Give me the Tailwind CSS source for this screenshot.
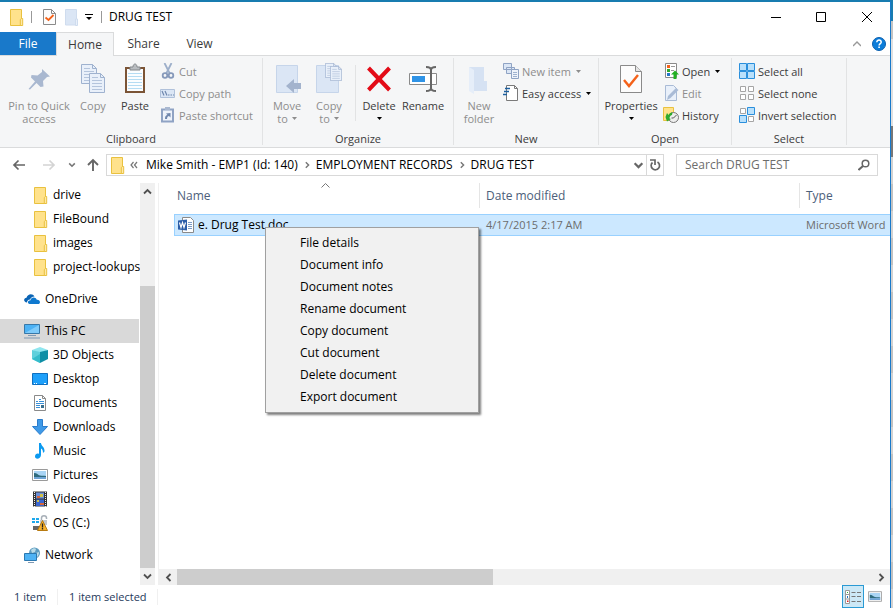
<!DOCTYPE html>
<html lang="en">
<head>
    <meta charset="UTF-8">
    <meta name="viewport" content="width=device-width, initial-scale=1.0">
    <title>DRUG TEST</title>
    <script src="https://cdn.jsdelivr.net/npm/@tailwindcss/browser@4"></script>
</head>
<body class="h-screen overflow-hidden flex font-['Open_Sans','Noto_Sans',sans-serif] text-[12px] leading-4 text-black">
    <!-- Shared icons -->
    <svg class="hidden">
        <symbol id="folder" viewBox="0 0 14 17">
            <path d="M.5.5h11v16H.5z" fill="#ffe28c" stroke="#e9c13f"/>
            <path d="M11.5 9.5h1.2v7h-2.4v-6z" fill="#ffe9a6" stroke="#e9c13f"/>
        </symbol>
        <symbol id="page-check" viewBox="0 0 22 28">
            <path d="M.5.5h15l6 6v21H.5z" fill="#fcfcfc" stroke="#8a8a8a"/>
            <path d="M15.5.5v6h6" fill="#e4e4e4" stroke="#8a8a8a"/>
            <path d="M4 15l5 6 9-11" fill="none" stroke="#f4621a" stroke-width="2.4"/>
        </symbol>
        <symbol id="page-lines" viewBox="0 0 16 20">
            <path d="M.5.5h11l4 4v15H.5z" fill="#e9f0fa" stroke="#9fb2cf"/>
            <path d="M11.5.5v4h4" fill="none" stroke="#9fb2cf"/>
            <path d="M3 4.500h6M3 7.500h10M3 10.500h10M3 13.500h10M3 16.500h10" stroke="#b4c4dc"/>
        </symbol>
        <symbol id="caret" viewBox="0 0 5 3"><path d="M0 0h5L2.500 3z" fill="currentColor"/></symbol>
        <symbol id="chevron-down" viewBox="0 0 10 10"><path d="M1.500 3L5 6.500 8.500 3" fill="none" stroke="currentColor" stroke-width="2"/></symbol>
        <symbol id="chevron-right" viewBox="0 0 10 10"><path d="M3.500 1.500L7 5 3.500 8.500" fill="none" stroke="currentColor" stroke-width="1.800"/></symbol>
        <symbol id="picture" viewBox="0 0 16 12">
            <path d="M.5.5h15v11H.5z" fill="#fff" stroke="#9a9a9a"/>
            <path d="M2 2h12v8H2z" fill="#a9d4f4"/>
            <path d="M2 4c3 0 4 2 6 2.500s4 0 6 .5v1H2z" fill="#2f6b7d"/>
            <path d="M2 8h12v2H2z" fill="#6fa3d4"/>
        </symbol>
    </svg>

    <div class="flex-1 min-w-0 flex flex-col bg-white border-t-2 border-t-[#187cb0] border-r border-r-[#1979ca]">
        <!-- Title bar -->
        <header class="h-[30px] shrink-0 flex items-center pl-[10px]">
            <svg class="w-[14px] h-[17px]"><use href="#folder"/></svg>
            <span class="w-px h-3 bg-[#999] ml-[7px]"></span>
            <button class="ml-[11px]" aria-label="Properties"><svg class="w-[13px] h-[16px]" viewBox="0 0 13 16"><path d="M.5.5h8l4 4v11H.5z" fill="#fcfcfc" stroke="#8a8a8a"/><path d="M8.500.5v4h4" fill="none" stroke="#8a8a8a"/><path d="M2.500 8.500l3 2.500 5-5" fill="none" stroke="#f4621a" stroke-width="1.800"/></svg></button>
            <button class="ml-[9px]" aria-label="New folder"><svg class="w-[13px] h-[17px]" viewBox="0 0 13 17"><path d="M.5.5h11v15.500H.5z" fill="#dbe6f5" stroke="#cfdcee"/><path d="M10.500 10h2v6.500h-2z" fill="#e9f0fa" stroke="#cfdcee"/></svg></button>
            <button class="ml-[7px]" aria-label="Customize Quick Access Toolbar"><svg class="w-[8px] h-[8px]" viewBox="0 0 8 8"><path d="M0 1.500h8" stroke="#000"/><path d="M1 4h6L4 7z"/></svg></button>
            <span class="w-px h-3 bg-[#999] ml-[8px]"></span>
            <h1 class="ml-[7px]">DRUG TEST</h1>
            <div class="ml-auto flex items-center">
                <button class="w-[45px] h-[28px] flex items-center justify-center" aria-label="Minimize"><svg class="w-[10px] h-[10px]" viewBox="0 0 10 10"><path d="M0 5.500h10" stroke="#000"/></svg></button>
                <button class="w-[45px] h-[28px] flex items-center justify-center" aria-label="Maximize"><svg class="w-[10px] h-[10px]" viewBox="0 0 10 10"><path d="M.5.5h9v9h-9z" fill="none" stroke="#000"/></svg></button>
                <button class="w-[47px] h-[28px] flex items-center justify-center" aria-label="Close"><svg class="w-[10px] h-[10px]" viewBox="0 0 10 10"><path d="M0 0l10 10M10 0L0 10" stroke="#000"/></svg></button>
            </div>
        </header>

        <!-- Ribbon tabs -->
        <nav class="h-[24px] shrink-0 flex items-stretch border-b border-[#dadbdc] text-[#3b3b3b]">
            <button class="w-[56px] bg-[#1979ca] text-white">File</button>
            <button class="w-[58px] -mb-px bg-[#f5f6f7] border-x border-t border-[#dadbdc]">Home</button>
            <button class="w-[59px]">Share</button>
            <button class="w-[53px]">View</button>
            <div class="ml-auto flex items-center pr-[4px] gap-[11px]">
                <button aria-label="Minimize the Ribbon"><svg class="w-[8px] h-[6px]" viewBox="0 0 8 6"><path d="M0 5l4-4 4 4" fill="none" stroke="#999" stroke-width="1.400"/></svg></button>
                <button aria-label="Help"><svg class="w-[14px] h-[14px]" viewBox="0 0 14 14"><circle cx="7" cy="7" r="6.500" fill="#0c7cd9" stroke="#0a5fae"/><path d="M4.800 5.300c0-3 4.600-2.800 4.400-.1C9.100 6.600 7.100 6.700 7.100 8.500" fill="none" stroke="#fff" stroke-width="1.500"/><path d="M6.300 9.500h1.600V11H6.300z" fill="#fff"/></svg></button>
            </div>
        </nav>

        <!-- Ribbon -->
        <div class="h-[92px] shrink-0 flex py-[2px] bg-[#f5f6f7] border-b border-[#dadbdc] text-[11px] leading-[13px] text-[#3b3b3b]">
            <section class="w-[263px] flex flex-col border-r border-[#e2e3e4]">
                <div class="flex-1 flex pl-[3px]">
                    <button class="w-[72px] flex flex-col items-center pt-[5px] text-[#8d8d8d]">
                        <svg class="w-[32px] h-[32px] mb-[4px]" viewBox="0 0 32 32"><path d="M19 6l8 7.500-3 .5-4 4 .5 5.500-3 .5-4-4-6.500 6.500-1.500-.5L12 18.500l-4-4 .5-2.500 6 .5L19 9z" fill="#a9b8d0"/></svg>
                        Pin to Quick<br>access
                    </button>
                    <button class="w-[36px] flex flex-col items-center pt-[5px] text-[#8d8d8d]">
                        <svg class="w-[26px] h-[32px] mb-[4px]" viewBox="0 0 26 32"><use href="#page-lines" x="1" y="1" width="16" height="20"/><use href="#page-lines" x="9" y="10" width="16" height="20"/></svg>
                        Copy
                    </button>
                    <button class="w-[48px] flex flex-col items-center pt-[5px]">
                        <svg class="w-[22px] h-[32px] mb-[4px]" viewBox="0 0 22 32"><path d="M1 4h20v26H1z" fill="#7b5436"/><path d="M3 6h16v22H3z" fill="#fbfdff"/><path d="M4 10.500h14M4 13.500h14M4 16.500h14M4 19.500h14M4 22.500h14M4 25.500h14" stroke="#b5dcf3"/><path d="M6 7V4h3c0-4 4-4 4 0h3v3z" fill="#b8bcc0" stroke="#84888c"/></svg>
                        Paste
                    </button>
                    <div class="flex flex-col pt-[2px] pl-px text-[#8d8d8d]">
                        <button class="h-[22px] flex items-center gap-[3px]"><svg class="w-4 h-4" viewBox="0 0 16 16"><path d="M4.500 0l5.500 11M11.500 0L6 11" stroke="#9dafca" stroke-width="1.800"/><circle cx="5" cy="12.500" r="2.300" fill="none" stroke="#8699ba" stroke-width="1.800"/><circle cx="11" cy="12.500" r="2.300" fill="none" stroke="#8699ba" stroke-width="1.800"/></svg>Cut</button>
                        <button class="h-[22px] flex items-center gap-[3px]"><svg class="w-4 h-4" viewBox="0 0 16 16"><path d="M.5 4.500h14v8H.5z" fill="#dbe6f5" stroke="#b0c1da"/><path d="M2 6l2 4.500M5 6l2 4.500M8 10h1.500M10.500 10H12M13 10h1" stroke="#6f87ad" stroke-width="1.200"/></svg>Copy path</button>
                        <button class="h-[22px] flex items-center gap-[3px]"><svg class="w-4 h-4" viewBox="0 0 16 16"><path d="M1 1.500h13v14H1z" fill="#8fa3c4"/><path d="M3 3.500h9v10H3z" fill="#eef3fb"/><path d="M5 0h5v3H5z" fill="#a9b8d0"/><path d="M5 12c0-3 1-4 2.500-4L6 6.500 10.500 6v4.500L9 9c-1 0-2 1-2 3z" fill="#6f87ad"/></svg>Paste shortcut</button>
                    </div>
                </div>
                <h2 class="text-center">Clipboard</h2>
            </section>

            <section class="w-[191px] flex flex-col border-r border-[#e2e3e4]">
                <div class="flex-1 flex pl-[3px]">
                    <button class="w-[42px] flex flex-col items-center pt-[5px] text-[#8d8d8d]">
                        <svg class="w-[28px] h-[32px] mb-[4px]" viewBox="0 0 28 32"><path d="M3.500 2.500h21v27h-21z" fill="#dbe6f5" stroke="#c6d5ea"/><path d="M29 20v6h-8v4l-8-7 8-7v4z" fill="#a3b3cd"/></svg>
                        Move<span class="flex items-center gap-1">to <svg class="w-[5px] h-[3px]"><use href="#caret"/></svg></span>
                    </button>
                    <button class="w-[42px] flex flex-col items-center pt-[5px] text-[#8d8d8d]">
                        <svg class="w-[28px] h-[32px] mb-[4px]" viewBox="0 0 28 32"><path d="M1.500 2.500h22v27h-22z" fill="#dbe6f5" stroke="#c6d5ea"/><use href="#page-lines" x="10" y="0" width="12" height="15"/><use href="#page-lines" x="15" y="3" width="12" height="15"/></svg>
                        Copy<span class="flex items-center gap-1">to <svg class="w-[5px] h-[3px]"><use href="#caret"/></svg></span>
                    </button>
                    <span class="w-px h-[56px] mt-[7px] ml-[5px] mr-[3px] bg-[#e2e3e4]"></span>
                    <button class="w-[40px] flex flex-col items-center pt-[5px]">
                        <svg class="w-[26px] h-[32px] mb-[4px]" viewBox="0 0 26 32"><path d="M2.500 5l21 22M23.500 5l-21 22" stroke="#e30b17" stroke-width="4"/></svg>
                        Delete<svg class="w-[5px] h-[3px] mt-[5px] text-black"><use href="#caret"/></svg>
                    </button>
                    <button class="w-[48px] flex flex-col items-center pt-[5px]">
                        <svg class="w-[30px] h-[32px] mb-[4px]" viewBox="0 0 30 32"><path d="M1.500 10.500h27v11h-27z" fill="#fff" stroke="#8a8a8a"/><path d="M4 13h13v6H4z" fill="#2f93e6"/><path d="M18 4c3 0 5 1 5 3 0-2 2-3 5-3M18 28c3 0 5-1 5-3 0 2 2 3 5 3M23 6v20" fill="none" stroke="#666" stroke-width="2"/></svg>
                        Rename
                    </button>
                </div>
                <h2 class="text-center">Organize</h2>
            </section>

            <section class="w-[145px] flex flex-col border-r border-[#e2e3e4]">
                <div class="flex-1 flex pl-[4px]">
                    <button class="w-[42px] flex flex-col items-center pt-[5px] text-[#8d8d8d]">
                        <svg class="w-[22px] h-[32px] mb-[4px]" viewBox="0 0 22 32"><path d="M1 4h15v14h3v10H5z" fill="#d6e2f3"/><path d="M1 4l5 3v24l-5-3z" fill="#e6eef9"/></svg>
                        New<br>folder
                    </button>
                    <div class="flex flex-col pt-[2px] pl-[3px]">
                        <button class="h-[22px] flex items-center gap-[3px] text-[#8d8d8d]"><svg class="w-4 h-4" viewBox="0 0 16 16"><path d="M.5.5h8v6h-8zM3.500 4.500h8v6h-8z" fill="#dbe6f5" stroke="#8fa3c4"/><path d="M8.500 6.500h7v9h-7z" fill="#eef3fb" stroke="#8fa3c4"/><path d="M10 9.500h4M10 11.500h4M10 13.500h4" stroke="#9fb2cf"/></svg>New item<svg class="w-[5px] h-[3px] ml-[2px]"><use href="#caret"/></svg></button>
                        <button class="h-[22px] flex items-center gap-[3px]"><svg class="w-4 h-4" viewBox="0 0 16 16"><path d="M3.500.5h8l3 3v12h-11z" fill="#fff" stroke="#7a7a7a"/><path d="M11.500.5v3h3" fill="none" stroke="#7a7a7a"/><path d="M2 3.500h5M1 6.500h5M0 9.500h4" stroke="#1c5f9f" stroke-width="1.400"/></svg>Easy access<svg class="w-[5px] h-[3px] ml-[2px] text-black"><use href="#caret"/></svg></button>
                    </div>
                </div>
                <h2 class="text-center">New</h2>
            </section>

            <section class="w-[133px] flex flex-col border-r border-[#e2e3e4]">
                <div class="flex-1 flex pl-[2px]">
                    <button class="w-[60px] flex flex-col items-center pt-[5px]">
                        <svg class="w-[22px] h-[32px] mb-[4px]"><use href="#page-check"/></svg>
                        Properties<svg class="w-[5px] h-[3px] mt-[5px] text-black"><use href="#caret"/></svg>
                    </button>
                    <div class="flex flex-col pt-[2px] pl-[2px]">
                        <button class="h-[22px] flex items-center gap-[3px]"><svg class="w-4 h-4" viewBox="0 0 16 16"><path d="M2.500.5h11v14h-11z" fill="#fff" stroke="#8a8a8a"/><path d="M4 2h3v3H4z" fill="#f4621a"/><path d="M4 6h3v3H4z" fill="#2eaa2e"/><path d="M4 10h3v3H4z" fill="#2474c6"/><path d="M8 3.500h4M8 7.500h3" stroke="#999"/><path d="M12 7.500l4 4h-2.500V16h-3v-4.500H8z" fill="#22b022"/></svg>Open<svg class="w-[5px] h-[3px] ml-[2px] text-black"><use href="#caret"/></svg></button>
                        <button class="h-[22px] flex items-center gap-[3px] text-[#8d8d8d]"><svg class="w-4 h-4" viewBox="0 0 16 16"><path d="M2.500.5h8l3 3v12h-11z" fill="#e9f0fa" stroke="#a9bbd6"/><path d="M4 15l1-4 8-8 2.500 2-8 8z" fill="#a9bbd6"/></svg>Edit</button>
                        <button class="h-[22px] flex items-center gap-[3px]"><svg class="w-4 h-4" viewBox="0 0 16 16"><path d="M.5.5h10v13H.5z" fill="#ffe28c" stroke="#e9c13f"/><circle cx="10.500" cy="10.500" r="5" fill="#eee" stroke="#777"/><path d="M10.500 11l3-3M10.500 11h-2" stroke="#555"/><path d="M4 6l1.500 2C6.500 6 8 5.500 9.500 5.500L9 8c-2 .5-2.500 2-2.500 3.500L8 12l-4 2.500L2.500 10z" fill="#2eaa2e"/></svg>History</button>
                    </div>
                </div>
                <h2 class="text-center">Open</h2>
            </section>

            <section class="w-[115px] flex flex-col border-r border-[#e2e3e4]">
                <div class="flex-1 flex flex-col pt-[2px] pl-[7px]">
                    <button class="h-[22px] flex items-center gap-[3px] whitespace-nowrap"><svg class="w-4 h-4 shrink-0" viewBox="0 0 16 16"><path d="M.5.5h7v7h-7zM8.500.5h7v7h-7zM.5 8.500h7v7h-7zM8.500 8.500h7v7h-7z" fill="#b9e0fb" stroke="#2a8fdc"/></svg>Select all</button>
                    <button class="h-[22px] flex items-center gap-[3px] whitespace-nowrap"><svg class="w-4 h-4 shrink-0" viewBox="0 0 16 16"><path d="M1.500 1.500h5v5h-5zM9.500 1.500h5v5h-5zM1.500 9.500h5v5h-5zM9.500 9.500h5v5h-5z" fill="#fff" stroke="#a5a5a5"/></svg>Select none</button>
                    <button class="h-[22px] flex items-center gap-[3px] whitespace-nowrap"><svg class="w-4 h-4 shrink-0" viewBox="0 0 16 16"><path d="M1.500 1.500h5v5h-5zM9.500 9.500h5v5h-5z" fill="#fff" stroke="#a5a5a5"/><path d="M8.500.5h7v7h-7zM.5 8.500h7v7h-7z" fill="#b9e0fb" stroke="#2a8fdc"/></svg>Invert selection</button>
                </div>
                <h2 class="text-center">Select</h2>
            </section>
        </div>

        <!-- Address bar -->
        <div class="h-[35px] shrink-0 flex items-center pl-[12px] pr-[12px] pb-px">
            <button aria-label="Back"><svg class="w-[14px] h-[12px]" viewBox="0 0 14 12"><path d="M13 6H2M6.500 1.500L2 6l4.500 4.500" fill="none" stroke="#666" stroke-width="1.700"/></svg></button>
            <button class="ml-[16px]" aria-label="Forward" disabled><svg class="w-[14px] h-[12px]" viewBox="0 0 14 12"><path d="M1 6h11M7.500 1.500L12 6l-4.500 4.500" fill="none" stroke="#d4d4d4" stroke-width="1.700"/></svg></button>
            <button class="ml-[12px] text-[#777]" aria-label="Recent locations"><svg class="w-[8px] h-[8px]"><use href="#chevron-down"/></svg></button>
            <button class="ml-[10px]" aria-label="Up"><svg class="w-[14px] h-[14px]" viewBox="0 0 14 14"><path d="M7 13V2M2 7l5-5 5 5" fill="none" stroke="#666" stroke-width="1.900"/></svg></button>
            <div class="flex-1 min-w-0 h-[22px] ml-[6px] flex items-center border border-[#d9d9d9]">
                <svg class="w-[14px] h-[17px] ml-[4px]"><use href="#folder"/></svg>
                <svg class="w-[8px] h-[8px] ml-[5px]" viewBox="0 0 8 8"><path d="M3.500 1L1 4l2.500 3M7 1L4.500 4 7 7" fill="none" stroke="#777" stroke-width="1.200"/></svg>
                <a href="#" class="ml-[8px]">Mike Smith - EMP1 (Id: 140)</a>
                <svg class="w-[8px] h-[8px] ml-[5px] text-[#777]"><use href="#chevron-right"/></svg>
                <a href="#" class="ml-[5px]">EMPLOYMENT RECORDS</a>
                <svg class="w-[8px] h-[8px] ml-[5px] text-[#777]"><use href="#chevron-right"/></svg>
                <a href="#" class="ml-[5px]">DRUG TEST</a>
                <button class="ml-auto mr-[2px] text-[#666]" aria-label="Previous locations"><svg class="w-[11px] h-[11px]"><use href="#chevron-down"/></svg></button>
                <button class="w-[17px] h-full flex items-center justify-center border-l border-[#d9d9d9]" aria-label="Refresh"><svg class="w-[12px] h-[12px]" viewBox="0 0 12 12"><path d="M3.500 3.500A4.200 4.200 0 1 0 8.500 3" fill="none" stroke="#666" stroke-width="1.700"/><path d="M1 1h5v5" fill="none" stroke="#666" stroke-width="1.700"/></svg></button>
            </div>
            <label class="w-[202px] h-[22px] ml-[12px] flex items-center border border-[#d9d9d9] pl-[8px] pr-[7px]">
                <input type="text" aria-label="Search" placeholder="Search DRUG TEST" class="flex-1 min-w-0 outline-none placeholder:text-[#6d6d6d]">
                <svg class="w-[12px] h-[12px]" viewBox="0 0 12 12"><circle cx="7.500" cy="4.500" r="3.300" fill="none" stroke="#666" stroke-width="1.500"/><path d="M5 7l-4.500 4" stroke="#666" stroke-width="2"/></svg>
            </label>
        </div>

        <div class="flex-1 min-h-0 flex">
            <!-- Navigation pane -->
            <aside class="w-[159px] shrink-0 flex border-r border-[#f0f0f0]">
                <nav class="w-[139px] mr-px whitespace-nowrap">
                    <a href="#" class="h-6 flex items-center gap-[5px] pl-[34px]"><svg class="w-[14px] h-[17px]"><use href="#folder"/></svg>drive</a>
                    <a href="#" class="h-6 flex items-center gap-[5px] pl-[34px]"><svg class="w-[14px] h-[17px]"><use href="#folder"/></svg>FileBound</a>
                    <a href="#" class="h-6 flex items-center gap-[5px] pl-[34px]"><svg class="w-[14px] h-[17px]"><use href="#folder"/></svg>images</a>
                    <a href="#" class="h-6 flex items-center gap-[5px] pl-[34px]"><svg class="w-[14px] h-[17px] shrink-0"><use href="#folder"/></svg>project-lookups</a>

                    <a href="#" class="h-6 mt-2 flex items-center gap-[5px] pl-[24px]"><svg class="w-4 h-4" viewBox="0 0 16 16"><path d="M3 11.500C-1 11-.5 7 2.500 6.800 3.500 3 8.500 2 10.500 5.500 8 5.500 6.500 7 6 8.500c-2 0-3 1.500-3 3z" fill="#0a64b5"/><path d="M5.500 13C3 12.500 3.500 9.300 6.500 9.300 7 6 11.500 5.500 12.800 8.800 16.500 8.500 17 13 14 13z" fill="#0f79cf"/></svg>OneDrive</a>

                    <a href="#" class="h-6 mt-2 flex items-center gap-[5px] pl-[24px] bg-[#d9d9d9]"><svg class="w-4 h-4" viewBox="0 0 16 16"><path d="M.5 1.500h15v9H.5z" fill="#4db2f4" stroke="#3878a8"/><path d="M1 10L15 2v8z" fill="#7fcbfa"/><path d="M4 12.500h8M0 15h16" stroke="#7f99b3"/></svg>This PC</a>
                    <a href="#" class="h-6 flex items-center gap-[5px] pl-[32px]"><svg class="w-4 h-4" viewBox="0 0 16 16"><path d="M0 3l8-3 8 3-8 3z" fill="#8fe6ef"/><path d="M0 3l8 2v11l-8-4z" fill="#5fd0dc"/><path d="M16 3L8 5v11l8-4z" fill="#0f8fa6"/><path d="M0 12l8-5v9z" fill="#35bccb"/></svg>3D Objects</a>
                    <a href="#" class="h-6 flex items-center gap-[5px] pl-[32px]"><svg class="w-4 h-4" viewBox="0 0 16 16"><path d="M.5 2.500h15v11H.5z" fill="#1ea0fa" stroke="#0f6fc0"/><path d="M2 12.500h1M4 12.500h1M12 12.500h2" stroke="#fff"/></svg>Desktop</a>
                    <a href="#" class="h-6 flex items-center gap-[5px] pl-[32px]"><svg class="w-4 h-4" viewBox="0 0 16 16"><path d="M2.500.5h8l3 3v12h-11z" fill="#fff" stroke="#8a8a8a"/><path d="M10.500.5v3h3" fill="none" stroke="#8a8a8a"/><path d="M4 6.500h2M7 4.500h2M7 6.500h5M4 8.500h8M4 10.500h4M4 12.500h4" stroke="#3a8fd6"/><path d="M9 10h3v3H9z" fill="#3a6f8f"/></svg>Documents</a>
                    <a href="#" class="h-6 flex items-center gap-[5px] pl-[32px]"><svg class="w-4 h-4" viewBox="0 0 16 16"><path d="M5.500.5h5v7h5L8 15.500.5 7.500h5z" fill="#3f9ae8" stroke="#2a7ccc"/></svg>Downloads</a>
                    <a href="#" class="h-6 flex items-center gap-[5px] pl-[32px]"><svg class="w-4 h-4" viewBox="0 0 16 16"><path d="M7 0h2c0 3 4 4 3.500 8.500L11 10c0-3-1-4-2-4.500V12c0 4-6 5-6 1.500C3 11 5.500 10 7 11z" fill="#0c9af0"/></svg>Music</a>
                    <a href="#" class="h-6 flex items-center gap-[5px] pl-[32px]"><svg class="w-[16px] h-[12px]"><use href="#picture"/></svg>Pictures</a>
                    <a href="#" class="h-6 flex items-center gap-[5px] pl-[32px]"><svg class="w-4 h-4" viewBox="0 0 16 16"><path d="M1 .5h14v15H1z" fill="#333"/><path d="M2.500 1v15M13.500 1v15" stroke="#eee" stroke-dasharray="1 1"/><path d="M4 1.500h8v6H4z" fill="#6a8fd8"/><path d="M4 8.500h8v6.500H4z" fill="#3a66d0"/><path d="M5 5h3v2H5zM8 12h4v2H8z" fill="#d8643a"/><path d="M8 3h3v3H8zM5 9h2v2H5z" fill="#cfc04a"/></svg>Videos</a>
                    <a href="#" class="h-6 flex items-center gap-[5px] pl-[32px]"><svg class="w-4 h-4" viewBox="0 0 16 16"><path d="M0 3h3v2H0zM4 3h3v2H4zM0 6h3v2H0zM4 6h3v2H4z" fill="#1ea8ec"/><path d="M1 11h6v4H1z" fill="#666"/><path d="M9.500 5V3c0-3 5-3 5 0v1" fill="none" stroke="#a8b0b8" stroke-width="1.500"/><path d="M8 5h7v5H8z" fill="#c3c8cd"/><path d="M10.500 5.500l5 10h-10z" fill="#f5b02c" stroke="#b87a10"/><path d="M10.500 8.500v4M10.500 13v1.500" stroke="#222" stroke-width="1.300"/></svg>OS (C:)</a>

                    <a href="#" class="h-6 mt-2 flex items-center gap-[5px] pl-[24px]"><svg class="w-4 h-4" viewBox="0 0 16 16"><circle cx="10.500" cy="6" r="5.500" fill="#5d9cc0"/><path d="M7 3c2-2 4-2 5-1l-1 3-3 1zM12 6l3-1c0 3-1 4-2 5z" fill="#b9dbe8"/><path d="M.5 6.500h12v7H.5z" fill="#4db2f4" stroke="#2b78b0"/><path d="M4 15.500h6" stroke="#7f99b3"/></svg>Network</a>
                </nav>
                <div class="w-[15px] flex flex-col bg-[#f0f0f0]">
                    <button class="h-[17px] flex items-center justify-center" aria-label="Scroll up"><svg class="w-[9px] h-[7px]" viewBox="0 0 9 7"><path d="M1 5.500L4.500 2 8 5.500" fill="none" stroke="#505050" stroke-width="1.800"/></svg></button>
                    <div class="flex-1 mt-[86px] bg-[#cdcdcd]"></div>
                    <button class="h-[17px] flex items-center justify-center" aria-label="Scroll down"><svg class="w-[9px] h-[7px]" viewBox="0 0 9 7"><path d="M1 1.500L4.500 5 8 1.500" fill="none" stroke="#505050" stroke-width="1.800"/></svg></button>
                </div>
            </aside>

            <!-- File list -->
            <main class="flex-1 min-w-0 flex flex-col relative">
                <div class="flex-1 min-h-0 overflow-hidden pl-[15px]">
                    <table class="w-full table-fixed border-separate border-spacing-0 text-left whitespace-nowrap">
                        <colgroup>
                            <col class="w-[306px]">
                            <col class="w-[320px]">
                            <col>
                        </colgroup>
                        <thead class="text-[#4c607a]">
                            <tr>
                                <th class="p-0 pb-[6px] font-normal">
                                    <div class="h-[25px] pl-[3px] flex items-center border-r border-[#e5e5e5] relative">
                                        Name
                                        <svg class="absolute top-0 left-1/2 -ml-1.5 w-[9px] h-[5px]" viewBox="0 0 9 5"><path d="M.5 4.500l4-4 4 4" fill="none" stroke="#777"/></svg>
                                    </div>
                                </th>
                                <th class="p-0 pb-[6px] font-normal"><div class="h-[25px] pl-[6px] flex items-center border-r border-[#e5e5e5]">Date modified</div></th>
                                <th class="p-0 pb-[6px] font-normal"><div class="h-[25px] pl-[6px] flex items-center">Type</div></th>
                            </tr>
                        </thead>
                        <tbody>
                            <tr class="bg-[#cce8ff] text-[#6d6d6d]">
                                <td class="h-[22px] p-0 border-y border-l border-[#99d1ff] text-black">
                                    <div class="flex items-center gap-[4px] pl-[3px]">
                                        <svg class="w-4 h-4" viewBox="0 0 16 16"><path d="M4.500.5h8l3 3v12h-11z" fill="#fff" stroke="#8a8a8a"/><path d="M10 5.500h4M10 7.500h4M10 9.500h4M10 11.500h4" stroke="#7a9cc8"/><path d="M0 3.500l9-1v11l-9-1z" fill="#2b5da8"/><path d="M1.500 5.500l1.500 5 1.500-5 1.500 5 1.500-5" fill="none" stroke="#fff" stroke-width="1.200"/></svg>
                                        e. Drug Test.doc
                                    </div>
                                </td>
                                <td class="p-0 pl-[6px] border-y border-[#99d1ff] text-[11px]">4/17/2015 2:17 AM</td>
                                <td class="p-0 pl-[6px] border-y border-[#99d1ff] text-[11px]">Microsoft Word</td>
                            </tr>
                        </tbody>
                    </table>
                </div>

                <!-- Context menu -->
                <ul class="absolute top-[44px] left-[106px] w-[214px] py-[4px] bg-[#f1f1f1] border border-[#a0a0a0] shadow-[2px_2px_2px_rgba(0,0,0,0.5)]">
                    <li><button class="w-full h-[22px] pl-[34px] text-left">File details</button></li>
                    <li><button class="w-full h-[22px] pl-[34px] text-left">Document info</button></li>
                    <li><button class="w-full h-[22px] pl-[34px] text-left">Document notes</button></li>
                    <li><button class="w-full h-[22px] pl-[34px] text-left">Rename document</button></li>
                    <li><button class="w-full h-[22px] pl-[34px] text-left">Copy document</button></li>
                    <li><button class="w-full h-[22px] pl-[34px] text-left">Cut document</button></li>
                    <li><button class="w-full h-[22px] pl-[34px] text-left">Delete document</button></li>
                    <li><button class="w-full h-[22px] pl-[34px] text-left">Export document</button></li>
                </ul>

                <div class="h-[16px] shrink-0 flex bg-[#f0f0f0]">
                    <button class="w-[18px] flex items-center justify-center" aria-label="Scroll left"><svg class="w-[7px] h-[9px]" viewBox="0 0 7 9"><path d="M5.500 1L2 4.500 5.500 8" fill="none" stroke="#505050" stroke-width="1.800"/></svg></button>
                    <div class="flex-1"><div class="w-5/11 h-full bg-[#cdcdcd]"></div></div>
                    <button class="w-[17px] flex items-center justify-center" aria-label="Scroll right"><svg class="w-[7px] h-[9px]" viewBox="0 0 7 9"><path d="M1.500 1L5 4.500 1.500 8" fill="none" stroke="#505050" stroke-width="1.800"/></svg></button>
                </div>
            </main>
        </div>

        <!-- Status bar -->
        <footer class="h-[23px] shrink-0 flex items-center pl-[14px] pr-[8px] text-[11px] text-[#1e395b]">
            <span class="w-[44px] border-r border-[#f0f0f0]">1 item</span>
            <span class="w-[100px] pl-[11px] border-r border-[#f0f0f0] whitespace-nowrap">1 item selected</span>
            <button class="ml-auto w-[22px] h-[23px] flex items-center justify-center bg-[#cce8f6] border border-[#2a9ad4]" aria-label="Details view"><svg class="w-[16px] h-[14px]" viewBox="0 0 16 14"><path d="M.5.5h4v13h-4zM.5 4.500h4M.5 9h4" fill="#fff" stroke="#999"/><path d="M2 2h1v1H2z" fill="#2eaa2e"/><path d="M2 6h1v2H2z" fill="#2474c6"/><path d="M2 10.500h1.500V12H2z" fill="#d22"/><path d="M6.500 2.500h4M12 2.500h4M6.500 6.500h4M12 6.500h4M6.500 11.500h4M12 11.500h4" stroke="#777"/></svg></button>
            <button class="ml-[4px]" aria-label="Large icons view"><svg class="w-[14px] h-[11px]"><use href="#picture"/></svg></button>
        </footer>
    </div>

    <!-- Window behind -->
    <div class="w-[2px] flex flex-col">
        <div class="h-[21px] bg-[#187cb0]"></div>
        <div class="h-[18px] bg-[#c4c4c4]"></div>
        <div class="h-[87px] bg-[#e0e0e0]"></div>
        <div class="h-[31px] bg-[#777]"></div>
        <div class="flex-1 bg-[repeating-linear-gradient(#d2d2d2_0_27px,#c2c2c2_27px_54px)]"></div>
    </div>
</body>
</html>
